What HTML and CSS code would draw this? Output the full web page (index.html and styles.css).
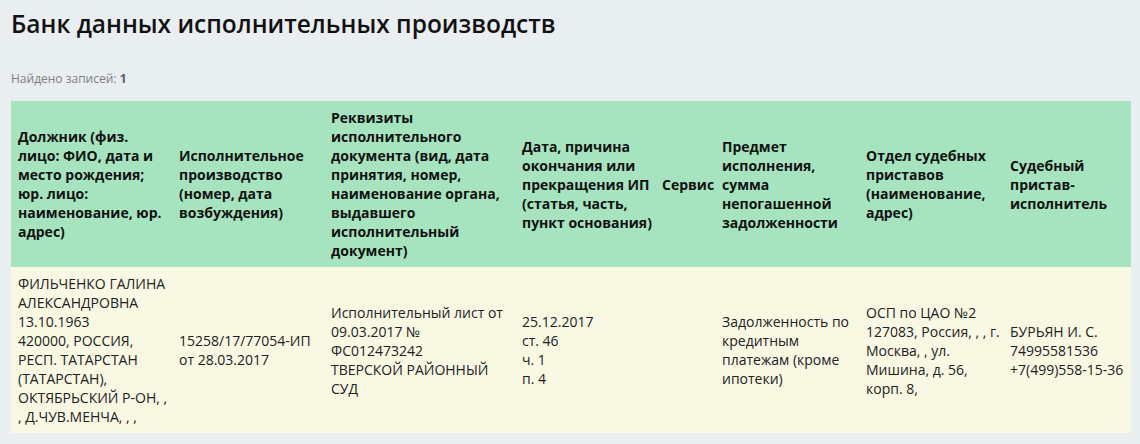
FILE: index.html
```html
<!DOCTYPE html>
<html lang="ru">
<head>
<meta charset="utf-8">
<title>Банк данных исполнительных производств</title>
<link rel="stylesheet" href="styles.css">
</head>
<body>
<h1 class="title">Банк данных исполнительных производств</h1>
<p class="found">Найдено записей: <b class="count">1</b></p>
<table class="results">
  <colgroup>
    <col class="c1"><col class="c2"><col class="c3"><col class="c4"><col class="c5"><col class="c6"><col class="c7"><col class="c8">
  </colgroup>
  <thead>
    <tr>
      <th>Должник (физ. лицо: ФИО, дата и место рождения; юр. лицо: наименование, юр. адрес)</th>
      <th>Исполнительное производство (номер, дата возбуждения)</th>
      <th>Реквизиты исполнительного документа (вид, дата принятия, номер, наименование органа, выдавшего исполнительный документ)</th>
      <th>Дата, причина окончания или прекращения ИП (статья, часть, пункт основания)</th>
      <th>Сервис</th>
      <th>Предмет исполнения, сумма непогашенной задолженности</th>
      <th>Отдел судебных приставов (наименование, адрес)</th>
      <th>Судебный пристав-исполнитель</th>
    </tr>
  </thead>
  <tbody>
    <tr>
      <td>ФИЛЬЧЕНКО ГАЛИНА АЛЕКСАНДРОВНА<br>13.10.1963<br>420000, РОССИЯ, РЕСП. ТАТАРСТАН (ТАТАРСТАН), ОКТЯБРЬСКИЙ Р-ОН, , , Д.ЧУВ.МЕНЧА, , ,</td>
      <td>15258/17/77054-ИП от 28.03.2017</td>
      <td>Исполнительный лист от 09.03.2017 № ФС012473242<br>ТВЕРСКОЙ РАЙОННЫЙ СУД</td>
      <td>25.12.2017<br>ст. 46<br>ч. 1<br>п. 4</td>
      <td></td>
      <td>Задолженность по кредитным платежам (кроме ипотеки)</td>
      <td>ОСП по ЦАО №2<br>127083, Россия, , , г. Москва, , ул. Мишина, д. 56, корп. 8,</td>
      <td>БУРЬЯН И. С.<br>74995581536<br>+7(499)558-15-36</td>
    </tr>
  </tbody>
</table>
</body>
</html>
```

FILE: styles.css
```css
html, body {
  margin: 0;
  padding: 0;
}
body {
  background: #e9eef1;
  font-family: "Open Sans", "Liberation Sans", sans-serif;
  color: #222;
  padding: 0 9px 0 11px;
  width: 1120px;
}
.title {
  margin: 8px 0 0;
  font-size: 24.5px;
  line-height: 32px;
  font-weight: 600;
  color: #111;
}
.found {
  margin: 31px 0 14px;
  font-size: 12px;
  line-height: 16px;
  color: #7b7f83;
}
.count {
  font-weight: 700;
  color: #55606a;
}
.results {
  width: 1120px;
  border-collapse: collapse;
  table-layout: fixed;
}
.c1 { width: 161px; }
.c2 { width: 152px; }
.c3 { width: 191px; }
.c4 { width: 140px; }
.c5 { width: 60px; }
.c6 { width: 144px; }
.c7 { width: 144px; }
.c8 { width: 128px; }
.results th,
.results td {
  padding: 7px 1px 7px 7px;
  font-size: 14px;
  line-height: 19px;
  text-align: left;
  vertical-align: middle;
}
.results th {
  background: #a6e4c0;
  font-weight: 700;
  color: #111;
}
.results td {
  background: #f9f8e3;
  color: #222;
}
```
